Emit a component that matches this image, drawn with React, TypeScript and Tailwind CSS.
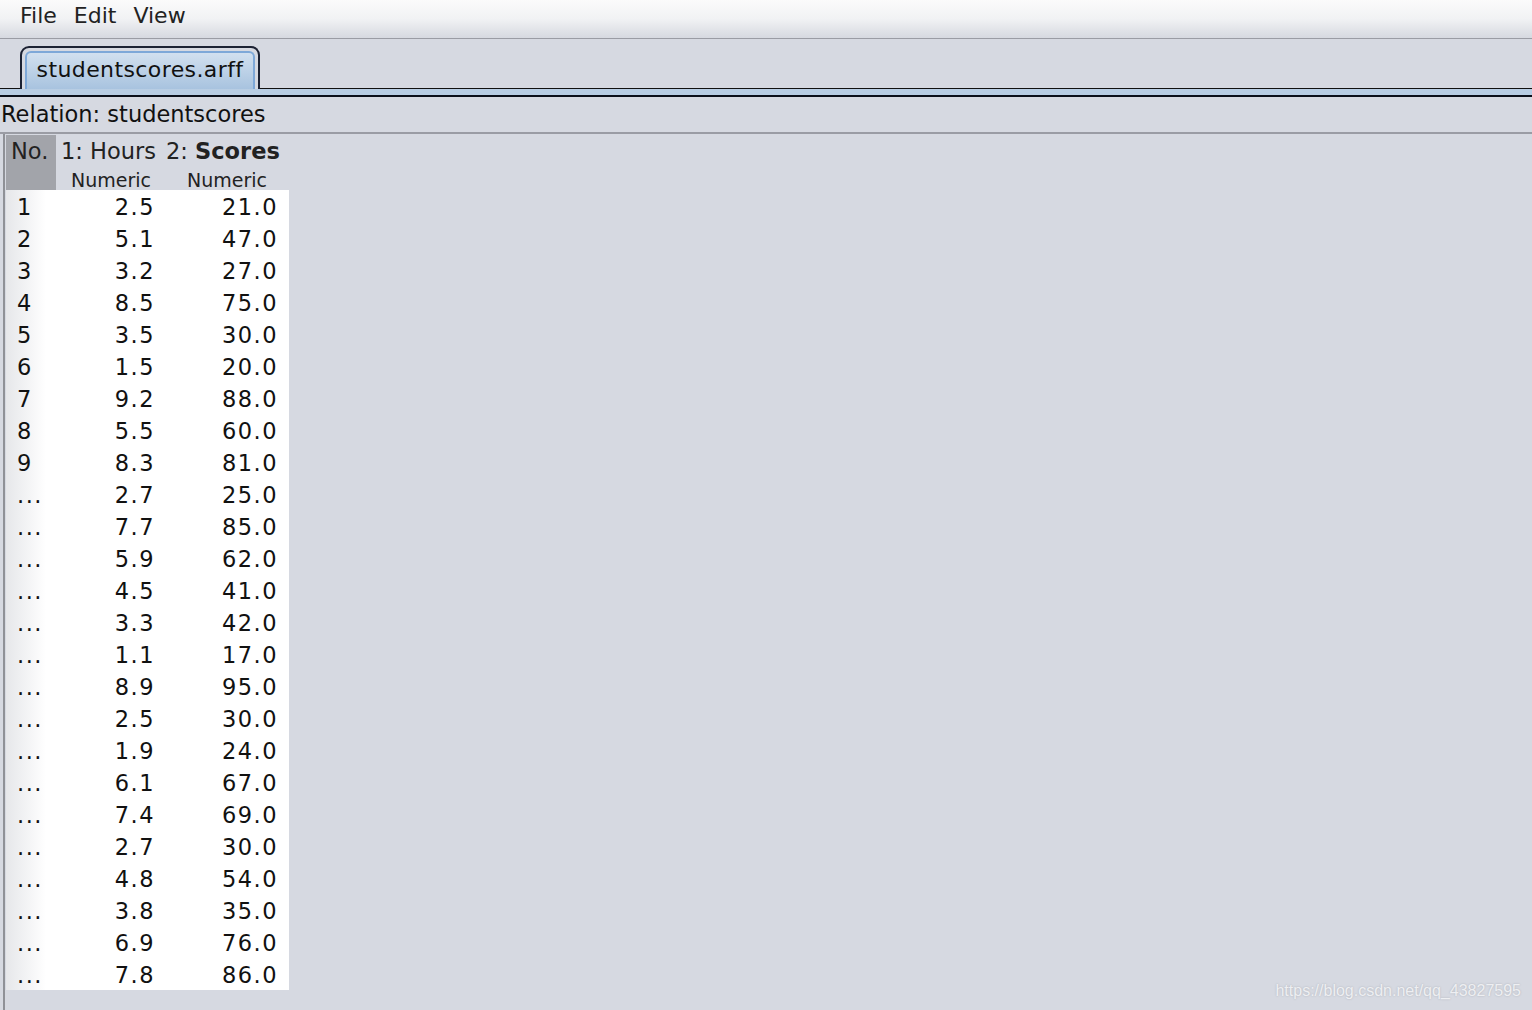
import React from 'react';

const rows: [string, string, string][] = [
  ['1', '2.5', '21.0'],
  ['2', '5.1', '47.0'],
  ['3', '3.2', '27.0'],
  ['4', '8.5', '75.0'],
  ['5', '3.5', '30.0'],
  ['6', '1.5', '20.0'],
  ['7', '9.2', '88.0'],
  ['8', '5.5', '60.0'],
  ['9', '8.3', '81.0'],
  ['...', '2.7', '25.0'],
  ['...', '7.7', '85.0'],
  ['...', '5.9', '62.0'],
  ['...', '4.5', '41.0'],
  ['...', '3.3', '42.0'],
  ['...', '1.1', '17.0'],
  ['...', '8.9', '95.0'],
  ['...', '2.5', '30.0'],
  ['...', '1.9', '24.0'],
  ['...', '6.1', '67.0'],
  ['...', '7.4', '69.0'],
  ['...', '2.7', '30.0'],
  ['...', '4.8', '54.0'],
  ['...', '3.8', '35.0'],
  ['...', '6.9', '76.0'],
  ['...', '7.8', '86.0'],
];

const font = "font-['DejaVu_Sans',sans-serif]";

export default function App() {
  return (
    <div className={`relative h-[1010px] w-full overflow-hidden bg-[#d6d9e1] text-[#111] ${font}`}>
      {/* menu bar */}
      <div className="flex h-[39px] items-center gap-[17px] border-b border-[#9a9ca4] bg-gradient-to-b from-[#fbfbfb] via-[#f1f2f4] to-[#d6d9e0] pb-[8px] pl-[20px] text-[22px] text-[#222]">
        <span>File</span>
        <span>Edit</span>
        <span>View</span>
      </div>

      {/* tab strip */}
      <div className="flex h-[50px] items-end pt-[7px]">
        <div className="h-[43px] w-[20px] border-b border-[#111]" />
        <div className="h-[43px] w-[240px] rounded-t-[9px] border-2 border-b-0 border-[#1c2233] px-[3px] pt-[3px]">
          <div className="flex h-full items-center justify-center rounded-t-[6px] border-2 border-b-0 border-[#7ea8d8] bg-gradient-to-b from-[#d2e0ef] to-[#a8c3df] pb-[3px] text-[22px] tracking-[0.4px] text-[#111]">
            studentscores.arff
          </div>
        </div>
        <div className="h-[43px] flex-1 border-b border-[#111]" />
      </div>
      <div className="h-[8px] border-b-2 border-[#0b0f1a] bg-[#b8cde3]" />

      {/* relation */}
      <div className="h-[37px] border-b-2 border-[#9a9ca4] pl-[1px] pt-[6px] text-[22.5px] leading-none">
        Relation: studentscores
      </div>

      {/* table */}
      <div className="ml-[3px] h-full border-l-2 border-[#8f9197] pl-px">
        <div className="flex h-[56px] w-[283px] pt-[1px]">
          <div className="w-[50px] bg-[#a2a4aa] pl-[5px] text-[22.5px] text-[#222]">No.</div>
          <div className="flex w-[110px] flex-col items-start">
            <div className="pl-[5px] text-[22.5px] text-[#222]">1: Hours</div>
            <div className="self-center text-[19px] leading-[22px] text-[#222]">Numeric</div>
          </div>
          <div className="flex w-[122px] flex-col items-start">
            <div className="text-[22.5px] text-[#222]">
              2: <span className="font-bold">Scores</span>
            </div>
            <div className="self-center text-[19px] leading-[22px] text-[#222]">Numeric</div>
          </div>
        </div>
        <div className="w-[283px] bg-[linear-gradient(to_right,#e6e7ea,#ffffff_40px)] text-[22.5px] tracking-[1.5px] text-[#111]">
          {rows.map((r, i) => (
            <div key={i} className="flex h-[32px] items-center pt-[4px]">
              <div className="w-[50px] pl-[11px]">{r[0]}</div>
              <div className="w-[110px] pr-[11px] text-right">{r[1]}</div>
              <div className="w-[122px] pr-[10px] text-right">{r[2]}</div>
            </div>
          ))}
        </div>
      </div>

      {/* watermark */}
      <div className="absolute bottom-[7px] right-[11px] font-['Liberation_Sans',sans-serif] text-[16px] text-[#eeeff2] [text-shadow:0_0_2px_#a9adb6]">
        https://blog.csdn.net/qq_43827595
      </div>
    </div>
  );
}
